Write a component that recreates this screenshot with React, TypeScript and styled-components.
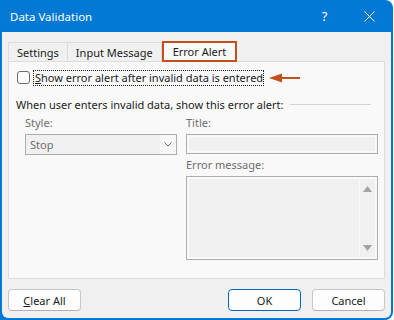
import React, { FC } from "react";
import styled, { createGlobalStyle } from "styled-components";

const GlobalStyle = createGlobalStyle`
	html, body {
		margin: 0;
		padding: 0;
		background: #ffffff;
	}
	body {
		font-family: "Noto Sans", "Open Sans", sans-serif;
		font-size: 11px;
		color: #1b1b1b;
	}
`;

const Window = styled.div`
	width: 393px;
	height: 320px;
	background: #0078d4;
	border-top-right-radius: 8px;
	border-bottom-right-radius: 8px;
	display: flex;
	flex-direction: column;
	overflow: hidden;
`;

const TitleBar = styled.div`
	height: 32px;
	display: flex;
	align-items: center;
	padding-left: 10px;
	padding-right: 1px;
	color: #ffffff;
	flex-shrink: 0;
`;

const TitleText = styled.span`
	flex: 1;
	font-size: 11.5px;
`;

const TitleButton = styled.span`
	width: 45px;
	display: flex;
	justify-content: center;
	align-items: center;
	color: #ffffff;
	font-size: 13px;
`;

const Body = styled.div`
	flex: 1;
	margin: 0 2px 2px 2px;
	background: #f0f0f0;
	border-bottom-left-radius: 6px;
	border-bottom-right-radius: 6px;
	padding: 9px 6px 0 6px;
	display: flex;
	flex-direction: column;
`;

const TabRow = styled.div`
	display: flex;
	align-items: flex-end;
	height: 20px;
	position: relative;
	z-index: 1;
`;

const Tab = styled.div<{ $first?: boolean }>`
	height: 19px;
	box-sizing: border-box;
	padding: 0 8px;
	display: flex;
	align-items: center;
	background: #f0f0f0;
	border: 1px solid #dcdcdc;
	border-bottom: none;
	border-left: ${(p) => (p.$first ? "1px solid #dcdcdc" : "none")};
`;

const ActiveTab = styled.div`
	height: 21px;
	box-sizing: border-box;
	padding: 0 9px;
	margin-bottom: -1px;
	display: flex;
	align-items: center;
	background: #f9f9f9;
	border: 2px solid #c4501b;
`;

const Panel = styled.div`
	height: 218px;
	box-sizing: border-box;
	border: 1px solid #dcdcdc;
	background: #f9f9f9;
	padding: 8px 7px 0 7px;
	display: flex;
	flex-direction: column;
`;

const CheckRow = styled.div`
	display: flex;
	align-items: center;
	height: 15px;
`;

const CheckBox = styled.span`
	width: 13px;
	height: 13px;
	box-sizing: border-box;
	border: 1px solid #6e6e6e;
	border-radius: 3px;
	background: #fdfdfd;
	margin-left: 1px;
	margin-right: 3px;
`;

const FocusLabel = styled.span`
	border: 1px dotted #1b1b1b;
	padding: 0 0 0 1px;
	height: 14px;
	display: flex;
	align-items: center;
`;

const Mnemonic = styled.span`
	text-decoration: underline;
`;

const Arrow = styled.svg`
	margin-left: 5px;
`;

const SectionRow = styled.div`
	display: flex;
	align-items: center;
	margin-top: 12px;
	gap: 6px;
`;

const Rule = styled.div`
	flex: 1;
	height: 1px;
	background: #d4d4d4;
	margin-right: 6px;
`;

const Columns = styled.div`
	display: grid;
	grid-template-columns: 152px 192px;
	column-gap: 9px;
	padding-left: 9px;
	margin-top: 3px;
`;

const Field = styled.div`
	display: flex;
	flex-direction: column;
`;

const FieldLabel = styled.div<{ $gap?: number }>`
	color: #6d6d6d;
	height: 16px;
	line-height: 16px;
	margin-top: ${(p) => p.$gap ?? 0}px;
	margin-bottom: 3px;
`;

const Select = styled.div`
	height: 21px;
	box-sizing: border-box;
	border: 1px solid #adadad;
	background: #f0f0f0;
	display: flex;
	align-items: stretch;
	color: #6d6d6d;
`;

const SelectValue = styled.span`
	flex: 1;
	display: flex;
	align-items: center;
	padding-left: 4px;
`;

const SelectButton = styled.span`
	width: 16px;
	background: #f9f9f9;
	display: flex;
	align-items: center;
	justify-content: center;
`;

const TextBox = styled.div<{ $height: number }>`
	height: ${(p) => p.$height}px;
	box-sizing: border-box;
	border: 1px solid #adadad;
	background: #f9f9f9;
	padding: 2px;
	display: flex;
	gap: 1px;
`;

const TextFill = styled.div`
	flex: 1;
	background: #f0f0f0;
`;

const ScrollBar = styled.div`
	width: 15px;
	background: #f0f0f0;
	display: flex;
	flex-direction: column;
	justify-content: space-between;
	align-items: center;
	padding: 7px 0 6px;
	box-sizing: border-box;
`;

const Footer = styled.div`
	display: flex;
	align-items: center;
	margin-top: 10px;
	gap: 11px;
`;

const Button = styled.button<{ $primary?: boolean }>`
	width: 73px;
	height: 22px;
	box-sizing: border-box;
	border: 1px solid ${(p) => (p.$primary ? "#0067c0" : "#c6c6c6")};
	border-bottom-color: ${(p) => (p.$primary ? "#0067c0" : "#b0b0b0")};
	border-radius: 4px;
	background: #fdfdfd;
	font-family: inherit;
	font-size: 11px;
	color: #1b1b1b;
	padding: 0;
	&:first-child {
		margin-right: auto;
	}
`;

const App: FC = () => {
	return (
		<Window>
			<GlobalStyle />
			<TitleBar>
				<TitleText>Data Validation</TitleText>
				<TitleButton>?</TitleButton>
				<TitleButton>
					<svg width="11" height="11" viewBox="0 0 11 11">
						<path d="M0.5 0.5 L10.5 10.5 M10.5 0.5 L0.5 10.5" stroke="#ffffff" strokeWidth="1" />
					</svg>
				</TitleButton>
			</TitleBar>
			<Body>
				<TabRow>
					<Tab $first>Settings</Tab>
					<Tab>Input Message</Tab>
					<ActiveTab>Error Alert</ActiveTab>
				</TabRow>
				<Panel>
					<CheckRow>
						<CheckBox />
						<FocusLabel>
							<span>
								<Mnemonic>S</Mnemonic>how error alert after invalid data is entered
							</span>
						</FocusLabel>
						<Arrow width="32" height="10" viewBox="0 0 32 10">
							<path d="M0 5 L13 0.5 L13 9.5 Z" fill="#c4501b" />
							<rect x="12" y="4" width="19" height="2" fill="#c4501b" />
						</Arrow>
					</CheckRow>
					<SectionRow>
						<span>When user enters invalid data, show this error alert:</span>
						<Rule />
					</SectionRow>
					<Columns>
						<Field>
							<FieldLabel>Style:</FieldLabel>
							<Select>
								<SelectValue>Stop</SelectValue>
								<SelectButton>
									<svg width="8" height="5" viewBox="0 0 8 5">
										<path d="M0.5 0.5 L4 4 L7.5 0.5" stroke="#6d6d6d" fill="none" strokeWidth="1" />
									</svg>
								</SelectButton>
							</Select>
						</Field>
						<Field>
							<FieldLabel>Title:</FieldLabel>
							<TextBox $height={20}>
								<TextFill />
							</TextBox>
							<FieldLabel $gap={3}>Error message:</FieldLabel>
							<TextBox $height={84}>
								<TextFill />
								<ScrollBar>
									<svg width="9" height="6" viewBox="0 0 9 6">
										<path d="M0 6 L4.5 0 L9 6 Z" fill="#a3a3a3" />
									</svg>
									<svg width="9" height="6" viewBox="0 0 9 6">
										<path d="M0 0 L9 0 L4.5 6 Z" fill="#a3a3a3" />
									</svg>
								</ScrollBar>
							</TextBox>
						</Field>
					</Columns>
				</Panel>
				<Footer>
					<Button>
						<Mnemonic>C</Mnemonic>lear All
					</Button>
					<Button $primary>OK</Button>
					<Button>Cancel</Button>
				</Footer>
			</Body>
		</Window>
	);
};

export default App;
